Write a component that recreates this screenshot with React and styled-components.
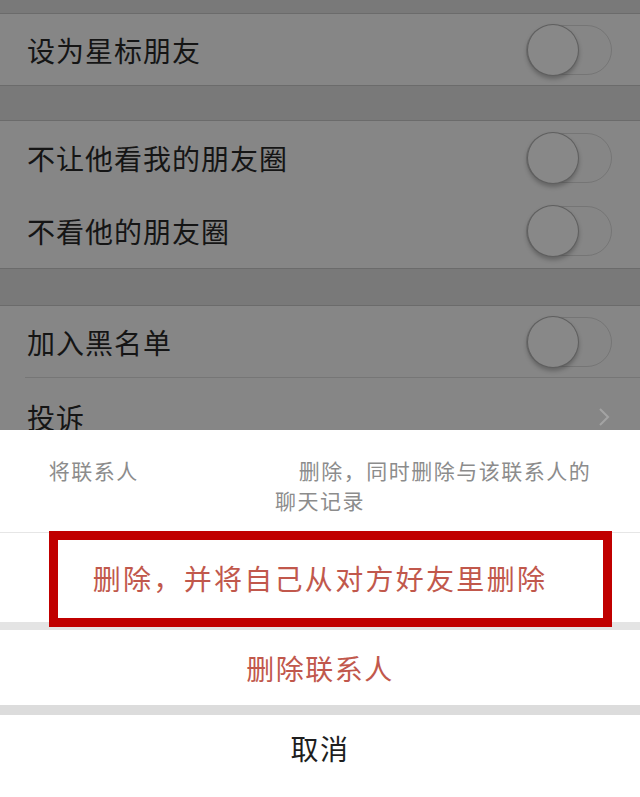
import React from "react";
import styled, { createGlobalStyle } from "styled-components";

const GlobalStyle = createGlobalStyle`
  html, body { margin: 0; padding: 0; background: #ffffff; }
  body { font-family: "Noto Sans CJK SC", "Noto Sans", sans-serif; }
  * { box-sizing: border-box; }
`;

const Page = styled.div`
  width: 640px;
  height: 797px;
  overflow: hidden;
  display: flex;
  flex-direction: column;
`;

const Settings = styled.div`
  height: 430px;
  flex: none;
  overflow: hidden;
  background: #797979;
  display: flex;
  flex-direction: column;
`;

const Gap = styled.div`
  height: ${(p) => p.$h}px;
  flex: none;
`;

const Group = styled.div`
  background: #868686;
  border-top: 1px solid #6b6b6b;
  border-bottom: 1px solid #6b6b6b;
  display: flex;
  flex-direction: column;
  flex: none;
`;

const Row = styled.div`
  height: ${(p) => p.$h}px;
  display: flex;
  align-items: center;
  justify-content: space-between;
  padding: 0 28px 0 27px;
  position: relative;
  ${(p) =>
    p.$divider &&
    `
    &::after {
      content: "";
      position: absolute;
      left: 25px;
      right: 0;
      bottom: 0;
      height: 1px;
      background: #767676;
    }
  `}
`;

const RowLabel = styled.span`
  font-size: 28px;
  letter-spacing: 1px;
  color: #151515;
  line-height: 1;
`;

const Switch = styled.div`
  width: 86px;
  height: 50px;
  border-radius: 25px;
  border: 1.5px solid rgba(60, 60, 60, 0.22);
  display: flex;
  align-items: center;
`;

const Knob = styled.div`
  width: 52px;
  height: 52px;
  margin-left: 0px;
  border-radius: 50%;
  background: #888888;
  border: 1.5px solid rgba(30, 30, 30, 0.38);
  box-shadow: 0 3px 4px rgba(0, 0, 0, 0.25);
`;

const Sheet = styled.div`
  flex: 1;
  background: #ffffff;
  display: flex;
  flex-direction: column;
`;

const Title = styled.div`
  height: 103px;
  flex: none;
  padding-top: 25px;
  text-align: center;
  font-size: 21px;
  letter-spacing: 1.5px;
  line-height: 30px;
  color: #8c8c8c;
  border-bottom: 1px solid #e6e6e6;
`;

const Blank = styled.span`
  display: inline-block;
  width: 160px;
`;

const Action = styled.div`
  height: ${(p) => p.$h}px;
  flex: none;
  display: flex;
  align-items: ${(p) => (p.$top ? "flex-start" : "center")};
  padding-top: ${(p) => (p.$top ? "15px" : "0")};
  justify-content: center;
  position: relative;
  font-size: 28px;
  letter-spacing: ${(p) => (p.$wide ? "2.3px" : "1.5px")};
  line-height: 36px;
  color: ${(p) => (p.$danger ? "#c1584c" : "#1e1e1e")};
`;

const Divider = styled.div`
  height: ${(p) => p.$h}px;
  flex: none;
  background: ${(p) => p.$c};
`;

const Highlight = styled.div`
  position: absolute;
  left: 49px;
  right: 28px;
  top: -2px;
  bottom: -5px;
  border: 9px solid #c00000;
  pointer-events: none;
`;

const Chevron = () => (
  <svg width="12" height="20" viewBox="0 0 12 20" style={{ marginRight: "2px" }}>
    <polyline points="2,2 10,10 2,18" fill="none" stroke="#a3a3a3" strokeWidth="2" />
  </svg>
);

const Toggle = () => (
  <Switch>
    <Knob />
  </Switch>
);

export default function App() {
  return (
    <Page>
      <GlobalStyle />
      <Settings>
        <Gap $h={13} />
        <Group>
          <Row $h={71}>
            <RowLabel>设为星标朋友</RowLabel>
            <Toggle />
          </Row>
        </Group>
        <Gap $h={34} />
        <Group>
          <Row $h={73}>
            <RowLabel>不让他看我的朋友圈</RowLabel>
            <Toggle />
          </Row>
          <Row $h={74}>
            <RowLabel>不看他的朋友圈</RowLabel>
            <Toggle />
          </Row>
        </Group>
        <Gap $h={36} />
        <Group>
          <Row $h={72} $divider>
            <RowLabel>加入黑名单</RowLabel>
            <Toggle />
          </Row>
          <Row $h={78}>
            <RowLabel>投诉</RowLabel>
            <Chevron />
          </Row>
        </Group>
      </Settings>
      <Sheet>
        <Title>
          将联系人<Blank />删除，同时删除与该联系人的
          <br />
          聊天记录
        </Title>
        <Action $h={89} $danger $wide>
          删除，并将自己从对方好友里删除
          <Highlight />
        </Action>
        <Divider $h={8} $c="#e4e4e4" />
        <Action $h={75} $danger>
          删除联系人
        </Action>
        <Divider $h={10} $c="#dcdcdc" />
        <Action $h={82} $top>
          取消
        </Action>
      </Sheet>
    </Page>
  );
}
